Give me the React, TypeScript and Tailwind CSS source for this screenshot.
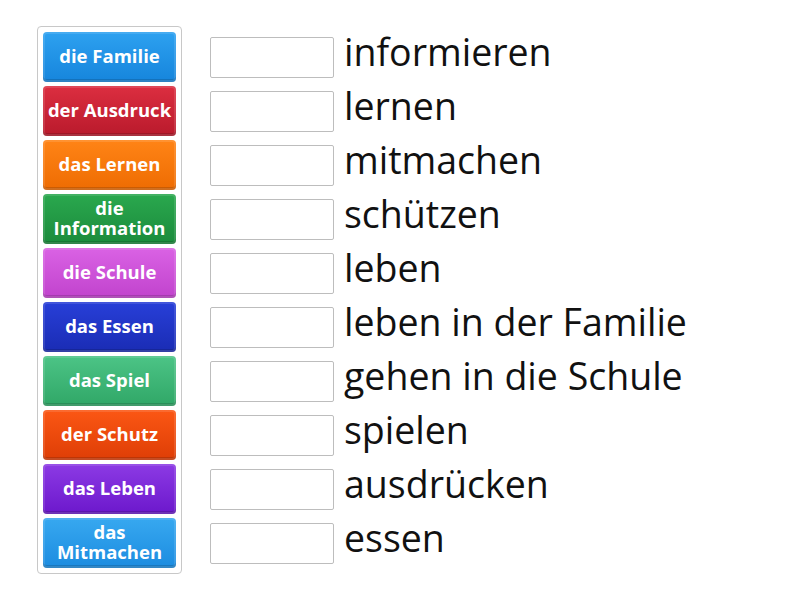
const cards = [
  { label: "die Familie", bg: "bg-[linear-gradient(#2da1f0,#1685dc)]" },
  { label: "der Ausdruck", bg: "bg-[linear-gradient(#dc2e40,#b91a2c)]" },
  { label: "das Lernen", bg: "bg-[linear-gradient(#ff8416,#ee6c02)]" },
  { label: "die Information", bg: "bg-[linear-gradient(#2aa84e,#1b8b3c)]" },
  { label: "die Schule", bg: "bg-[linear-gradient(#da62e4,#c143cd)]" },
  { label: "das Essen", bg: "bg-[linear-gradient(#283fd8,#1a2cb4)]" },
  { label: "das Spiel", bg: "bg-[linear-gradient(#4cc486,#30a767)]" },
  { label: "der Schutz", bg: "bg-[linear-gradient(#fb5714,#de3e06)]" },
  { label: "das Leben", bg: "bg-[linear-gradient(#8c3ae4,#6c18cc)]" },
  { label: "das Mitmachen", bg: "bg-[linear-gradient(#37a8f0,#1c8ce0)]" },
];

const words = [
  "informieren",
  "lernen",
  "mitmachen",
  "schützen",
  "leben",
  "leben in der Familie",
  "gehen in die Schule",
  "spielen",
  "ausdrücken",
  "essen",
];

export default function App() {
  return (
    <div className="w-[800px] h-[600px] bg-white flex pt-[26px] pl-[37px] font-['Open_Sans',sans-serif]">
      <div className="flex flex-col gap-[4px] p-[5px] border border-[#c8c8c8] rounded-[4px] self-start">
        {cards.map((c) => (
          <div
            key={c.label}
            className={`w-[133px] h-[50px] rounded-[4px] flex items-center justify-center text-center px-[2px] pb-[3px] text-white font-bold text-[18.5px] leading-[20px] shadow-[inset_0_0_0_2px_rgba(255,255,255,0.12),inset_0_-3px_0_rgba(0,0,0,0.15)] ${c.bg}`}
          >
            {c.label}
          </div>
        ))}
      </div>
      <div className="flex flex-col gap-[4px] ml-[28px] pt-[6px]">
        {words.map((w) => (
          <div key={w} className="h-[50px] flex items-center">
            <div className="w-[124px] h-[41px] border border-[#bdbdbd] rounded-[2px] bg-white" />
            <span className="ml-[10px] mb-[10px] text-[37.5px] leading-none text-[#111]">{w}</span>
          </div>
        ))}
      </div>
    </div>
  );
}
